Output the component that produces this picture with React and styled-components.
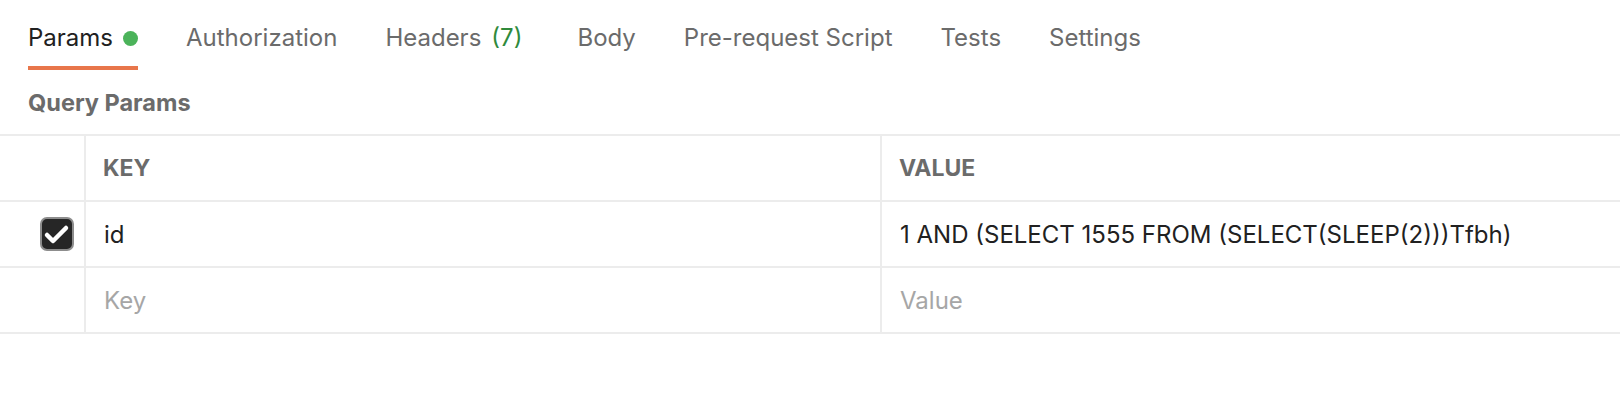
import React from "react";
import styled, { createGlobalStyle } from "styled-components";

const GlobalStyle = createGlobalStyle`
  html, body {
    margin: 0;
    padding: 0;
    background: #ffffff;
  }
  body {
    font-family: Inter, "Noto Sans", "Liberation Sans", sans-serif;
    color: #212121;
    -webkit-font-smoothing: antialiased;
  }
`;

const Page = styled.div`
  width: 1620px;
  height: 406px;
  background: #ffffff;
  overflow: hidden;
`;

const TabBar = styled.nav`
  display: flex;
  align-items: flex-end;
  gap: 48px;
  padding: 0 28px;
  height: 70px;
`;

const Tab = styled.div`
  display: flex;
  align-items: center;
  gap: 10px;
  height: 28px;
  padding: 24px 0 14px;
  font-size: 24px;
  line-height: 28px;
  color: ${(p) => (p.$active ? "#212121" : "#6b6b6b")};
  border-bottom: 4px solid ${(p) => (p.$active ? "#e8764b" : "transparent")};
  margin-right: ${(p) => p.$extra || 0}px;
  white-space: nowrap;
`;

const Dot = styled.span`
  width: 15px;
  height: 15px;
  border-radius: 50%;
  background: #4bb35a;
`;

const Count = styled.span`
  color: #2f8a3c;
`;

const SectionTitle = styled.div`
  height: 64px;
  display: flex;
  align-items: center;
  padding: 0 28px;
  font-size: 23.5px;
  font-weight: 700;
  color: #6b6b6b;
`;

const Table = styled.div`
  border-top: 2px solid #ececec;
`;

const Row = styled.div`
  display: grid;
  grid-template-columns: 86px 796px 1fr;
  height: 64px;
  border-bottom: 2px solid #ececec;
`;

const Cell = styled.div`
  display: flex;
  align-items: center;
  padding: 0 ${(p) => (p.$head ? "17px" : "18px")};
  border-right: ${(p) => (p.$last ? "none" : "2px solid #ececec")};
  font-size: ${(p) => (p.$head ? "23px" : "24px")};
  font-weight: ${(p) => (p.$head ? 700 : 400)};
  color: ${(p) =>
    p.$head ? "#6b6b6b" : p.$placeholder ? "#a6a6a6" : "#212121"};
  white-space: nowrap;
  overflow: hidden;
`;

const CheckCell = styled(Cell)`
  justify-content: flex-end;
  padding: 0 10px 0 0;
`;

const CheckBox = styled.span`
  box-sizing: border-box;
  width: 34px;
  height: 34px;
  border-radius: 7px;
  background: #262626;
  border: 2px solid #8d8d8d;
  display: flex;
  align-items: center;
  justify-content: center;
`;

const tabs = [
  { label: "Params", active: true, dot: true },
  { label: "Authorization" },
  { label: "Headers", count: "(7)", extra: 7 },
  { label: "Body" },
  { label: "Pre-request Script" },
  { label: "Tests" },
  { label: "Settings" },
];

export default function App() {
  return (
    <Page>
      <GlobalStyle />
      <TabBar>
        {tabs.map((t) => (
          <Tab key={t.label} $active={t.active} $extra={t.extra}>
            <span>{t.label}</span>
            {t.dot && <Dot />}
            {t.count && <Count>{t.count}</Count>}
          </Tab>
        ))}
      </TabBar>
      <SectionTitle>Query Params</SectionTitle>
      <Table>
        <Row>
          <Cell />
          <Cell $head>KEY</Cell>
          <Cell $head $last>VALUE</Cell>
        </Row>
        <Row>
          <CheckCell>
            <CheckBox>
              <svg width="30" height="30" viewBox="0 0 30 30">
                <polyline
                  points="5,16 11,22 24,9"
                  fill="none"
                  stroke="#ffffff"
                  strokeWidth="4.5"
                  strokeLinecap="round"
                  strokeLinejoin="round"
                />
              </svg>
            </CheckBox>
          </CheckCell>
          <Cell>id</Cell>
          <Cell $last>1 AND (SELECT 1555 FROM (SELECT(SLEEP(2)))Tfbh)</Cell>
        </Row>
        <Row>
          <Cell />
          <Cell $placeholder>Key</Cell>
          <Cell $placeholder $last>Value</Cell>
        </Row>
      </Table>
    </Page>
  );
}
